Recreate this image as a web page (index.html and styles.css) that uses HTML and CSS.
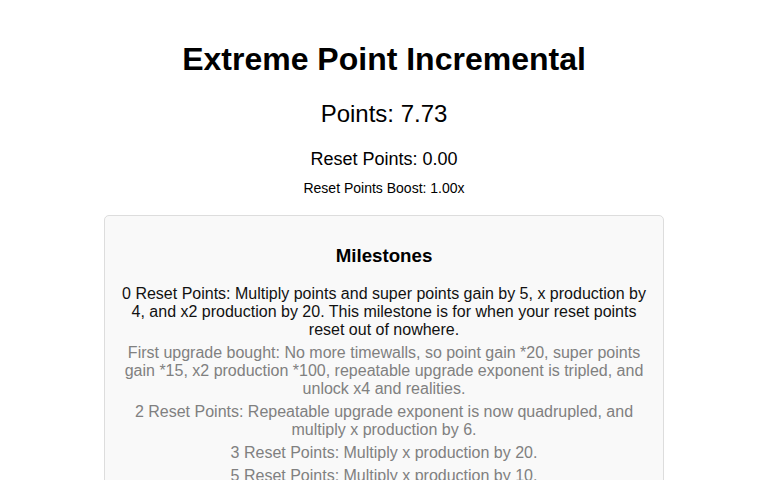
FILE: index.html
```html
<!DOCTYPE html>
<html lang="en">
<head>
    <meta charset="UTF-8">
    <meta name="viewport" content="width=device-width, initial-scale=1.0">
    <title>Extreme Point Incremental</title>
    <link rel="stylesheet" href="styles.css">
</head>
<body>
    <h1>Extreme Point Incremental</h1>
    <h2 id="points">Points: 7.73</h2>
    <p class="reset">Reset Points: 0.00</p>
    <p class="boost">Reset Points Boost: 1.00x</p>

    <!-- Milestones -->
    <div class="milestones">
        <h3>Milestones</h3>
        <p class="milestone done">0 Reset Points: Multiply points and super points gain by 5, x production by 4, and x2 production by 20. This milestone is for when your reset points reset out of nowhere.</p>
        <p class="milestone">First upgrade bought: No more timewalls, so point gain *20, super points gain *15, x2 production *100, repeatable upgrade exponent is tripled, and unlock x4 and realities.</p>
        <p class="milestone">2 Reset Points: Repeatable upgrade exponent is now quadrupled, and multiply x production by 6.</p>
        <p class="milestone">3 Reset Points: Multiply x production by 20.</p>
        <p class="milestone">5 Reset Points: Multiply x production by 10.</p>
    </div>
</body>
</html>
```

FILE: styles.css
```css
body {
    font-family: "Liberation Sans", Arial, sans-serif;
    background-color: #fff;
    color: #000;
    margin: 0;
    padding: 20px 0;
    text-align: center;
}
h1 {
    font-size: 32px;
    margin: 21px 0;
}
h2 {
    font-size: 24px;
    font-weight: normal;
    margin: 22px 0 21px;
}
.reset {
    font-size: 18px;
    margin: 0 0 10px;
}
.boost {
    font-size: 14px;
    margin: 0 0 19px;
}
.milestones {
    width: 538px;
    margin: 0 auto;
    padding: 10px;
    background: #f9f9f9;
    border: 1px solid #ddd;
    border-radius: 5px;
}
.milestones h3 {
    font-size: 18.72px;
    margin: 18.72px 0;
}
.milestone {
    font-size: 16px;
    margin: 5px 0;
    color: #808080;
}
.milestone.done {
    color: #111;
}
```
